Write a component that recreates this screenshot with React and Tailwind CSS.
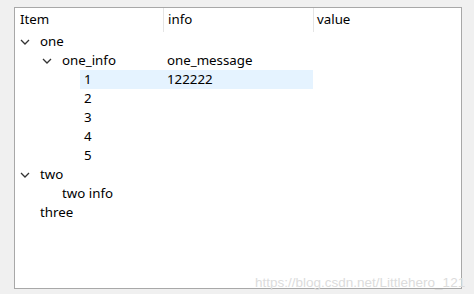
const rows = [
  { level: 0, label: "one", open: true },
  { level: 1, label: "one_info", info: "one_message", open: true },
  { level: 2, label: "1", info: "122222", selected: true },
  { level: 2, label: "2" },
  { level: 2, label: "3" },
  { level: 2, label: "4" },
  { level: 2, label: "5" },
  { level: 0, label: "two", open: true },
  { level: 1, label: "two info" },
  { level: 0, label: "three" },
];

const indents = ["w-0", "w-[22px]", "w-[44px]"];

const Chevron = () => (
  <svg width="10" height="6" viewBox="0 0 10 6" className="ml-[5px]">
    <path d="M1 1 L5 5 L9 1" fill="none" stroke="#333" strokeWidth="1.3" />
  </svg>
);

const Row = ({ row }) => {
  const selBg = row.selected ? "bg-[#e5f3ff]" : "";
  return (
    <div className="flex h-[19px] items-center">
      <div className="flex h-full w-[149px] shrink-0">
        <div className={`${indents[row.level]} shrink-0`} />
        <div className="flex w-[21px] shrink-0 items-center">{row.open && <Chevron />}</div>
        <div className={`flex flex-1 items-center pl-[4px] ${selBg}`}>{row.label}</div>
      </div>
      <div className={`flex h-full w-[149px] shrink-0 items-center pl-[3px] ${selBg}`}>
        {row.info}
      </div>
      <div className="flex-1" />
    </div>
  );
};

export default function App() {
  return (
    <div
      className="relative h-[294px] w-[474px] bg-[#f0f0f0] pt-[7px] pl-[14px] text-[13.3px] text-black"
      style={{ fontFamily: '"Noto Sans", "Noto Sans CJK SC", sans-serif' }}
    >
      <div className="h-[282px] w-[448px] border border-[#a8a8a8] bg-white">
        <div className="flex h-[24px] items-center">
          <div className="flex h-full w-[149px] items-center border-r border-[#e5e5e5] pl-[5px]">Item</div>
          <div className="flex h-full w-[150px] items-center border-r border-[#e5e5e5] pl-[4px]">info</div>
          <div className="flex h-full flex-1 items-center pl-[3px]">value</div>
        </div>
        {rows.map((row, i) => (
          <Row key={i} row={row} />
        ))}
      </div>
      <div
        className="absolute left-[255px] top-[276px] text-[13.5px] leading-none text-[#dcdcdc]"
        style={{ fontFamily: '"Liberation Sans", sans-serif' }}
      >
        https://blog.csdn.net/Littlehero_121
      </div>
    </div>
  );
}
